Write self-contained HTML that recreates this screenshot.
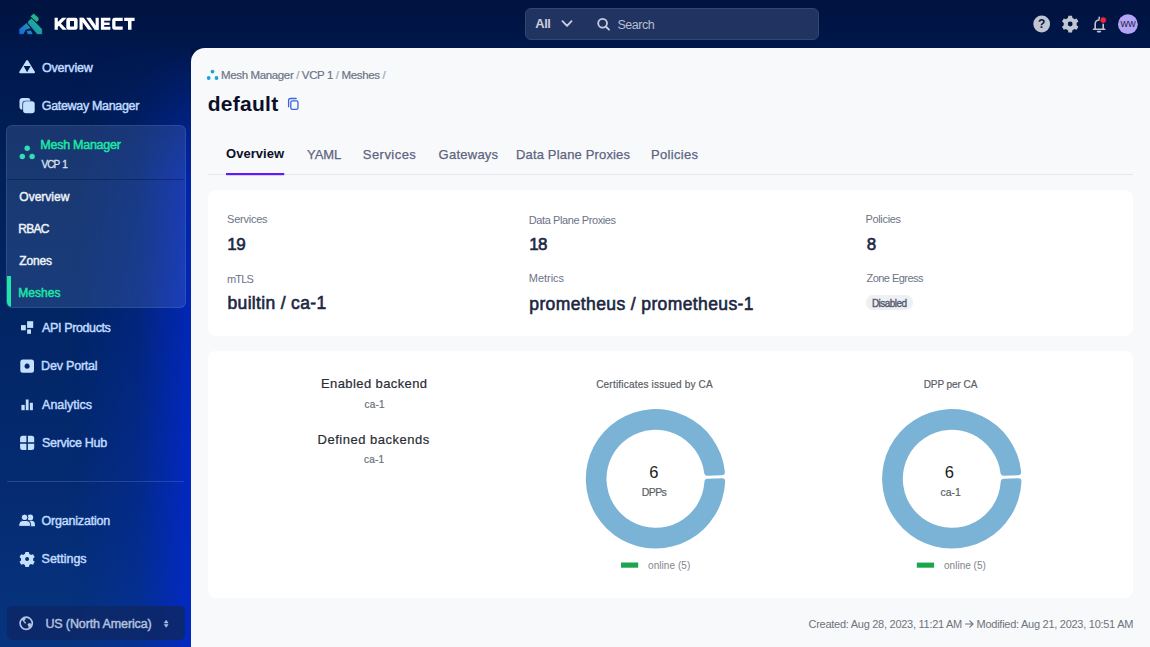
<!DOCTYPE html>
<html><head><meta charset="utf-8">
<style>
*{box-sizing:border-box;margin:0;padding:0}
html,body{width:1150px;height:647px;overflow:hidden}
body{font-family:"Liberation Sans",sans-serif;background:#001442;position:relative}
.a{position:absolute}
.t{position:absolute;white-space:nowrap;line-height:1}
#side{position:absolute;left:0;top:0;width:191px;height:647px;
 background:linear-gradient(180deg,#00184b 0%,#00184d 8%,#002058 25%,#042a70 72%,#07347f 100%)}
#glow{position:absolute;left:0;top:0;width:191px;height:647px;
 background:linear-gradient(90deg,rgba(2,40,205,0) 38%,rgba(2,40,205,0.25) 72%,rgba(2,40,205,0.88) 100%);
 -webkit-mask-image:linear-gradient(180deg,transparent 7%,rgba(0,0,0,0.8) 28%,#000 70%);mask-image:linear-gradient(180deg,transparent 7%,rgba(0,0,0,0.8) 28%,#000 70%)}
#top{position:absolute;left:0;top:0;width:1150px;height:48px;background:linear-gradient(180deg,#00123f 0%,#00184b 100%)}
#main{position:absolute;left:191px;top:48px;width:959px;height:599px;background:#f8f9fb;border-top-left-radius:14px}
.card{position:absolute;background:#fff;border-radius:8px}
</style></head><body>
<div id="side"></div><div id="glow"></div>
<div id="top"></div>
<div id="main"></div>

<!-- logo -->
<svg class="a" style="left:0;top:0" width="48" height="48" viewBox="0 0 48 48">
<defs><linearGradient id="lg" x1="19" y1="34" x2="39" y2="14" gradientUnits="userSpaceOnUse">
<stop offset="0" stop-color="#1c5fe6"/><stop offset="0.55" stop-color="#1d9fa8"/><stop offset="1" stop-color="#26c47a"/></linearGradient></defs>
<g fill="url(#lg)" stroke="#001442" stroke-width="0.7" stroke-linejoin="round">
<polygon points="33.6,13.3 38.9,17.8 38.9,20.4 36.6,22.2 30,16.5"/>
<polygon points="27.6,21.5 31.6,18.1 42.3,29 42.3,34.6 37.1,34.6 27.6,23.2"/>
<polygon points="18.9,29.1 26.5,22.8 31.3,28.4 26.2,29.9 23.4,34.6 18.9,34.6"/>
<polygon points="26,30.6 31.1,30.1 33.2,34.6 27.5,34.6"/>
</g></svg>


<svg class="a" style="left:50px;top:14px" width="90" height="20" viewBox="50 14 90 20">
<g fill="#fff">
<path d="M54.6,17.8 H57.8 V21.9 L62.2,17.8 H66.6 L60.9,23.4 L66.9,29.7 H62.5 L58.9,25.7 L57.8,26.8 V29.7 H54.6 Z"/>
<path fill-rule="evenodd" d="M68.5,17.8 H75.4 A2.2,2.2 0 0 1 77.6,20 V27.5 A2.2,2.2 0 0 1 75.4,29.7 H68.5 A2.2,2.2 0 0 1 66.3,27.5 V20 A2.2,2.2 0 0 1 68.5,17.8 Z M70,21.1 V26.5 H74 V21.1 Z"/>
<rect x="79.5" y="17.8" width="3.2" height="11.9"/>
<polygon points="79.5,17.8 83.7,17.8 92.4,29.7 88.2,29.7"/>
<polygon points="86.2,17.8 90.4,17.8 98.8,29.7 94.6,29.7"/>
<rect x="95.6" y="17.8" width="3.2" height="11.9"/>
<path d="M100.9,17.8 H110.4 V20.8 H104.2 V22.5 H109.6 V25.1 H104.2 V26.8 H110.4 V29.7 H100.9 Z"/>
<path d="M122.7,17.8 H114.7 A2.5,2.5 0 0 0 112.2,20.3 V27.2 A2.5,2.5 0 0 0 114.7,29.7 H122.7 V26.5 H115.5 V21 H122.7 Z"/>
<path d="M124.2,17.8 H134.6 V21 H131.5 V29.7 H128 V21 H124.2 Z"/>
</g></svg>

<!-- search -->
<div class="a" style="left:525px;top:8px;width:294px;height:32px;border-radius:6px;background:#213360;border:1px solid #36476f"></div>
<svg class="a" style="left:560px;top:18px" width="14" height="12" viewBox="0 0 14 12"><polyline points="2.5,3.2 7,7.8 11.5,3.2" fill="none" stroke="#c9cfdc" stroke-width="1.9" stroke-linecap="round" stroke-linejoin="round"/></svg>
<svg class="a" style="left:594px;top:15px" width="18" height="18" viewBox="0 0 18 18"><circle cx="8.6" cy="8.2" r="4.4" fill="none" stroke="#c9cfdc" stroke-width="1.8"/><line x1="11.8" y1="11.5" x2="15" y2="14.7" stroke="#c9cfdc" stroke-width="1.9" stroke-linecap="round"/></svg>

<!-- header icons -->
<svg class="a" style="left:1030px;top:12px" width="110" height="24" viewBox="1030 12 110 24">
<circle cx="1041.7" cy="24" r="8.4" fill="#c0c5d2"/>
<text x="1041.7" y="28.3" font-family="Liberation Sans" font-weight="bold" font-size="12" fill="#001442" text-anchor="middle">?</text>
<g transform="translate(1070.2,24)" fill="#c0c5d2">
<path d="M-1.8,-8.2 h3.6 l0.5,2.3 a6,6 0 0 1 1.9,1.1 l2.2,-0.8 l1.8,3.1 l-1.8,1.5 a6,6 0 0 1 0,2.2 l1.8,1.5 l-1.8,3.1 l-2.2,-0.8 a6,6 0 0 1 -1.9,1.1 l-0.5,2.3 h-3.6 l-0.5,-2.3 a6,6 0 0 1 -1.9,-1.1 l-2.2,0.8 l-1.8,-3.1 l1.8,-1.5 a6,6 0 0 1 0,-2.2 l-1.8,-1.5 l1.8,-3.1 l2.2,0.8 a6,6 0 0 1 1.9,-1.1 z"/>
<circle r="2.4" fill="#001442"/>
</g>
<path d="M1093.5,29.3 h11.3 M1095.2,29.3 v-5.3 a4,4 0 0 1 8,0 v5.3 M1097.6,31.6 h2.8 M1099.2,20 v-2.6" fill="none" stroke="#c0c5d2" stroke-width="1.6" stroke-linecap="round"/>
<circle cx="1103.2" cy="20.1" r="3.3" fill="#f0243c" stroke="#001746" stroke-width="0.9"/>
<circle cx="1127.9" cy="24.2" r="9.9" fill="#b3a4f7"/>
<text x="1127.9" y="27" font-family="Liberation Sans" font-size="8.2" fill="#1d1a3a" text-anchor="middle" letter-spacing="-0.3">WW</text>
</svg>

<!-- sidebar -->
<svg class="a" style="left:0;top:48px" width="191" height="599" viewBox="0 48 191 599">
<g fill="#c3e0ff">
<path d="M27.1,61 L34,72.2 L20.2,72.2 Z" stroke="#c3e0ff" stroke-width="2" stroke-linejoin="round"/>
<path d="M23.6,66.1 L30.6,66.1 L27.1,72.3 Z" fill="#001a50"/>
<rect x="19.5" y="98.1" width="11" height="11.6" rx="3"/>
<rect x="22.4" y="100.7" width="12.8" height="13.1" rx="3.2" fill="#001a58"/>
<rect x="23.1" y="101.3" width="11.6" height="12" rx="2.8"/>
<rect x="27.1" y="321.2" width="6.1" height="6.7"/>
<rect x="21" y="325.1" width="4.8" height="5.2"/>
<rect x="27.1" y="329.4" width="3.9" height="4.4"/>
<path d="M22.8,359.6 h8.7 a2.5,2.5 0 0 1 2.5,2.5 v8.1 a2.5,2.5 0 0 1 -2.5,2.5 h-8.7 a2.5,2.5 0 0 1 -2.5,-2.5 v-8.1 a2.5,2.5 0 0 1 2.5,-2.5 z M27.1,363.6 a2.6,2.6 0 1 0 0.01,0 z" fill-rule="evenodd"/>
<rect x="21.4" y="404.9" width="3.3" height="5.3"/>
<rect x="25.8" y="399.5" width="2.8" height="10.7"/>
<rect x="29.9" y="402.8" width="3" height="7.4"/>
<path d="M22.6,435.8 h3.8 v6.4 h-6.3 v-3.9 a2.5,2.5 0 0 1 2.5,-2.5 z M27.9,435.8 h3.8 a2.5,2.5 0 0 1 2.5,2.5 v3.9 h-6.3 z M20.1,443.7 h6.3 v6.4 h-3.8 a2.5,2.5 0 0 1 -2.5,-2.5 z M27.9,443.7 h6.3 v3.9 a2.5,2.5 0 0 1 -2.5,2.5 h-3.8 z"/>
<circle cx="30.3" cy="517.4" r="2.9"/>
<path d="M27.5,526.2 v-1.8 a3.6,3.6 0 0 1 3.6,-3.6 h0.3 a3.5,3.5 0 0 1 3.5,3.5 v1.9 z"/>
<circle cx="24.6" cy="517.4" r="3.3" stroke="#072468" stroke-width="1"/>
<path d="M18.8,526.4 v-2 a3.9,3.9 0 0 1 3.9,-3.9 h4 a3.9,3.9 0 0 1 3.9,3.9 v2 z" stroke="#072468" stroke-width="1"/>
<g transform="translate(27.1,558.9)">
<path d="M-1.7,-7 h3.4 l0.5,2.1 a5,5 0 0 1 1.6,0.9 l2.1,-0.7 l1.7,2.9 l-1.6,1.4 a5,5 0 0 1 0,1.9 l1.6,1.4 l-1.7,2.9 l-2.1,-0.7 a5,5 0 0 1 -1.6,0.9 l-0.5,2.1 h-3.4 l-0.5,-2.1 a5,5 0 0 1 -1.6,-0.9 l-2.1,0.7 l-1.7,-2.9 l1.6,-1.4 a5,5 0 0 1 0,-1.9 l-1.6,-1.4 l1.7,-2.9 l2.1,0.7 a5,5 0 0 1 1.6,-0.9 z M0,-2 a2,2 0 1 0 0.01,0 z" fill-rule="evenodd"/>
</g>
</g>
<circle cx="27.2" cy="148.2" r="2.7" fill="#1de9a6"/>
<circle cx="22.3" cy="156.5" r="2.7" fill="#1de9a6"/>
<circle cx="32.1" cy="156.5" r="2.7" fill="#1de9a6"/>
</svg>

<!-- mesh manager box -->
<div class="a" style="left:6px;top:125px;width:179.5px;height:183px;border-radius:6px;background:rgba(150,175,240,0.17);border:1px solid rgba(180,200,250,0.13);overflow:hidden">
 <div class="a" style="left:0;top:53px;width:177px;height:1px;background:rgba(0,10,50,0.35)"></div>
 <div class="a" style="left:-1px;top:150px;width:4.5px;height:33px;background:#1de9a6"></div>
</div>
<div class="a" style="left:7px;top:481px;width:177px;height:1px;background:rgba(150,170,230,0.22)"></div>
<div class="a" style="left:6.8px;top:605.7px;width:178.4px;height:34.6px;border-radius:5px;background:rgba(12,40,104,0.88)"></div>
<svg class="a" style="left:0;top:600px" width="191" height="47" viewBox="0 600 191 47">
<circle cx="26.2" cy="623.3" r="6.1" fill="none" stroke="#b5c3e0" stroke-width="1.7"/>
<path d="M21.6,619.3 q1.2,-1.6 3.4,-2.2 l0.6,2.2 l-1.4,1.6 l1.8,1.6 l-0.8,1.6 z" fill="#b5c3e0"/>
<path d="M27.3,624 l2.6,-0.9 l2.1,1.1 q-0.6,2.9 -3.3,4.5 l-0.3,-2.4 z" fill="#b5c3e0"/>
<path d="M164.3,622.9 L166.2,620.2 L168.1,622.9 Z M164.3,624.6 L166.2,627.3 L168.1,624.6 Z" fill="#b3c1dd" stroke="#b3c1dd" stroke-width="0.6" stroke-linejoin="round"/>
</svg>

<!-- main content decorations -->
<svg class="a" style="left:191px;top:48px" width="959" height="599" viewBox="191 48 959 599">
<circle cx="212.5" cy="71.6" r="1.9" fill="#1aa3d8"/>
<circle cx="208.7" cy="78" r="1.9" fill="#1aa3d8"/>
<circle cx="216.5" cy="78" r="1.9" fill="#1aa3d8"/>
<path d="M288.6,106.8 v-6.3 a2,2 0 0 1 2,-2 h5.6" fill="none" stroke="#3b64de" stroke-width="1.3" stroke-linecap="round"/>
<rect x="290.8" y="100.8" width="7.2" height="8.5" rx="1.6" fill="none" stroke="#3b64de" stroke-width="1.3"/>
<rect x="208" y="174" width="925" height="1" fill="#e4e7ec"/>
<rect x="226" y="173" width="58.2" height="2.2" fill="#5f1bfa"/>
</svg>

<div class="card" style="left:208px;top:190px;width:925px;height:146px"></div>
<div class="card" style="left:208px;top:350.5px;width:925px;height:247.5px"></div>
<div class="a" style="left:866px;top:295px;width:46.7px;height:15.4px;border-radius:7px;background:#eef0f4"></div>

<svg class="a" style="left:560px;top:380px" width="500" height="200" viewBox="560 380 500 200">
<path d="M707.51 478.67 L721.85 478.22 A3.2 3.2 0 0 1 725.15 481.54 A69.7 69.7 0 1 1 724.84 471.69 A3.2 3.2 0 0 1 721.75 475.22 L707.42 475.67 A3.2 3.2 0 0 1 704.14 472.86 A49 49 0 1 0 704.42 481.68 A3.2 3.2 0 0 1 707.51 478.67 Z" fill="#7bb3d6"/>
<path d="M1003.81 478.67 L1018.15 478.22 A3.2 3.2 0 0 1 1021.45 481.54 A69.7 69.7 0 1 1 1021.14 471.69 A3.2 3.2 0 0 1 1018.05 475.22 L1003.72 475.67 A3.2 3.2 0 0 1 1000.44 472.86 A49 49 0 1 0 1000.72 481.68 A3.2 3.2 0 0 1 1003.81 478.67 Z" fill="#7bb3d6"/>
<rect x="621" y="562.5" width="17.2" height="5.2" fill="#1ba64e"/>
<rect x="916.8" y="562.6" width="17.3" height="5.1" fill="#1ba64e"/>
</svg>

<div class="t" style="left:41.9px;top:61.8px;font-size:12.5px;font-weight:normal;letter-spacing:-0.157px;color:#c0dbff;-webkit-text-stroke:0.45px #c0dbff">Overview</div>
<div class="t" style="left:41.8px;top:100.1px;font-size:12.5px;font-weight:normal;letter-spacing:-0.329px;color:#c0dbff;-webkit-text-stroke:0.45px #c0dbff">Gateway Manager</div>
<div class="t" style="left:40.3px;top:139.4px;font-size:12.5px;font-weight:normal;letter-spacing:-0.255px;color:#1de9a6;-webkit-text-stroke:0.45px #1de9a6">Mesh Manager</div>
<div class="t" style="left:41.5px;top:160.0px;font-size:10px;font-weight:normal;letter-spacing:-0.975px;color:#dfe4ee;-webkit-text-stroke:0.3px #dfe4ee;word-spacing:1.5px">VCP 1</div>
<div class="t" style="left:19.3px;top:190.5px;font-size:12px;font-weight:normal;letter-spacing:0.014px;color:#eef2f8;-webkit-text-stroke:0.45px #eef2f8">Overview</div>
<div class="t" style="left:18.3px;top:223.0px;font-size:12px;font-weight:normal;letter-spacing:-0.767px;color:#eef2f8;-webkit-text-stroke:0.45px #eef2f8">RBAC</div>
<div class="t" style="left:19.3px;top:255.0px;font-size:12px;font-weight:normal;letter-spacing:-0.15px;color:#eef2f8;-webkit-text-stroke:0.45px #eef2f8">Zones</div>
<div class="t" style="left:18.3px;top:287.0px;font-size:12px;font-weight:normal;letter-spacing:0.04px;color:#1de9a6;-webkit-text-stroke:0.45px #1de9a6">Meshes</div>
<div class="t" style="left:42.1px;top:321.8px;font-size:12.5px;font-weight:normal;letter-spacing:-0.382px;color:#c0dbff;-webkit-text-stroke:0.45px #c0dbff">API Products</div>
<div class="t" style="left:41.1px;top:360.2px;font-size:12.5px;font-weight:normal;letter-spacing:-0.2px;color:#c0dbff;-webkit-text-stroke:0.45px #c0dbff">Dev Portal</div>
<div class="t" style="left:42.1px;top:399.2px;font-size:12.5px;font-weight:normal;letter-spacing:-0.025px;color:#c0dbff;-webkit-text-stroke:0.45px #c0dbff">Analytics</div>
<div class="t" style="left:42.1px;top:437.3px;font-size:12.5px;font-weight:normal;letter-spacing:-0.31px;color:#c0dbff;-webkit-text-stroke:0.45px #c0dbff">Service Hub</div>
<div class="t" style="left:41.6px;top:514.8px;font-size:12.5px;font-weight:normal;letter-spacing:-0.209px;color:#c0dbff;-webkit-text-stroke:0.45px #c0dbff">Organization</div>
<div class="t" style="left:41.6px;top:553.4px;font-size:12.5px;font-weight:normal;letter-spacing:-0.029px;color:#c0dbff;-webkit-text-stroke:0.45px #c0dbff">Settings</div>
<div class="t" style="left:45.4px;top:617.7px;font-size:12.5px;font-weight:normal;letter-spacing:-0.118px;color:#b3c1dd;-webkit-text-stroke:0.45px #b3c1dd">US (North America)</div>
<div class="t" style="left:535.3px;top:17.2px;font-size:13px;font-weight:bold;letter-spacing:-0.5px;color:#c9cfdc;">All</div>
<div class="t" style="left:617.5px;top:18.6px;font-size:12.5px;font-weight:normal;letter-spacing:-0.5px;color:#b6bfd2;">Search</div>
<div class="t" style="left:221.1px;top:69.7px;font-size:11.5px;font-weight:normal;letter-spacing:-0.37px;color:#6c7387;-webkit-text-stroke:0.2px #6c7387">Mesh Manager <span style="color:#b4b9c4">/</span> VCP 1 <span style="color:#b4b9c4">/</span> Meshes <span style="color:#b4b9c4">/</span></div>
<div class="t" style="left:207.8px;top:93.1px;font-size:21px;font-weight:bold;letter-spacing:0.25px;color:#0b0f28;">default</div>
<div class="t" style="left:226.1px;top:147.0px;font-size:13px;font-weight:bold;letter-spacing:0.014px;color:#0b0f28;">Overview</div>
<div class="t" style="left:307.0px;top:147.6px;font-size:13px;font-weight:normal;letter-spacing:-0.033px;color:#5d6480;-webkit-text-stroke:0.25px #5d6480">YAML</div>
<div class="t" style="left:362.8px;top:147.6px;font-size:13px;font-weight:normal;letter-spacing:0.457px;color:#5d6480;-webkit-text-stroke:0.25px #5d6480">Services</div>
<div class="t" style="left:438.6px;top:147.6px;font-size:13px;font-weight:normal;letter-spacing:0.243px;color:#5d6480;-webkit-text-stroke:0.25px #5d6480">Gateways</div>
<div class="t" style="left:516.0px;top:147.6px;font-size:13px;font-weight:normal;letter-spacing:0.159px;color:#5d6480;-webkit-text-stroke:0.25px #5d6480">Data Plane Proxies</div>
<div class="t" style="left:651.1px;top:147.6px;font-size:13px;font-weight:normal;letter-spacing:0.286px;color:#5d6480;-webkit-text-stroke:0.25px #5d6480">Policies</div>
<div class="t" style="left:227.1px;top:214.3px;font-size:11px;font-weight:normal;letter-spacing:-0.243px;color:#6c7387;">Services</div>
<div class="t" style="left:227.3px;top:236.3px;font-size:17px;font-weight:normal;letter-spacing:-0.5px;color:#1c2742;-webkit-text-stroke:0.6px #1c2742">19</div>
<div class="t" style="left:227.0px;top:273.9px;font-size:11px;font-weight:normal;letter-spacing:-0.833px;color:#6c7387;">mTLS</div>
<div class="t" style="left:227.5px;top:295.3px;font-size:17.5px;font-weight:normal;letter-spacing:0.331px;color:#1c2742;-webkit-text-stroke:0.6px #1c2742">builtin / ca-1</div>
<div class="t" style="left:528.8px;top:214.7px;font-size:11px;font-weight:normal;letter-spacing:-0.412px;color:#6c7387;">Data Plane Proxies</div>
<div class="t" style="left:529.3px;top:236.3px;font-size:17px;font-weight:normal;letter-spacing:-0.7px;color:#1c2742;-webkit-text-stroke:0.6px #1c2742">18</div>
<div class="t" style="left:528.8px;top:273.4px;font-size:11px;font-weight:normal;letter-spacing:-0.033px;color:#6c7387;">Metrics</div>
<div class="t" style="left:529.3px;top:296.3px;font-size:17.5px;font-weight:normal;letter-spacing:0.383px;color:#1c2742;-webkit-text-stroke:0.6px #1c2742">prometheus / prometheus-1</div>
<div class="t" style="left:865.5px;top:214.3px;font-size:11px;font-weight:normal;letter-spacing:-0.343px;color:#6c7387;">Policies</div>
<div class="t" style="left:866.8px;top:236.2px;font-size:17px;font-weight:normal;letter-spacing:0.3px;color:#1c2742;-webkit-text-stroke:0.6px #1c2742">8</div>
<div class="t" style="left:866.5px;top:273.2px;font-size:11px;font-weight:normal;letter-spacing:-0.53px;color:#6c7387;">Zone Egress</div>
<div class="t" style="left:871.9px;top:299.2px;font-size:10px;font-weight:normal;letter-spacing:-0.529px;color:#555c70;-webkit-text-stroke:0.4px #555c70">Disabled</div>
<div class="t" style="left:321.0px;top:377.0px;font-size:13px;font-weight:normal;letter-spacing:0.4px;color:#2b2d36;-webkit-text-stroke:0.2px #2b2d36">Enabled backend</div>
<div class="t" style="left:364.6px;top:399.9px;font-size:10px;font-weight:normal;letter-spacing:0.133px;color:#6b6f78;-webkit-text-stroke:0.2px #6b6f78">ca-1</div>
<div class="t" style="left:317.6px;top:432.9px;font-size:13px;font-weight:normal;letter-spacing:0.507px;color:#2b2d36;-webkit-text-stroke:0.2px #2b2d36">Defined backends</div>
<div class="t" style="left:364.1px;top:455.4px;font-size:10px;font-weight:normal;letter-spacing:0.133px;color:#6b6f78;-webkit-text-stroke:0.2px #6b6f78">ca-1</div>
<div class="t" style="left:596.2px;top:379.9px;font-size:10px;font-weight:normal;letter-spacing:0.2px;color:#5a5e66;-webkit-text-stroke:0.2px #5a5e66">Certificates issued by CA</div>
<div class="t" style="left:649.3px;top:463.8px;font-size:16.5px;font-weight:normal;letter-spacing:1.2px;color:#1a1a1a;">6</div>
<div class="t" style="left:641.8px;top:486.5px;font-size:10.5px;font-weight:normal;letter-spacing:-0.6px;color:#5a5e66;-webkit-text-stroke:0.2px #5a5e66">DPPs</div>
<div class="t" style="left:648.0px;top:561.2px;font-size:10px;font-weight:normal;letter-spacing:0.067px;color:#80848c;">online (5)</div>
<div class="t" style="left:923.7px;top:379.8px;font-size:10px;font-weight:normal;letter-spacing:-0.067px;color:#5a5e66;-webkit-text-stroke:0.2px #5a5e66">DPP per CA</div>
<div class="t" style="left:944.8px;top:463.8px;font-size:16.5px;font-weight:normal;letter-spacing:0.9px;color:#1a1a1a;">6</div>
<div class="t" style="left:940.6px;top:487.0px;font-size:10.5px;font-weight:normal;letter-spacing:-0.1px;color:#5a5e66;-webkit-text-stroke:0.2px #5a5e66">ca-1</div>
<div class="t" style="left:944.0px;top:561.2px;font-size:10px;font-weight:normal;letter-spacing:0.022px;color:#80848c;">online (5)</div>
<div class="t" style="left:808.5px;top:618.5px;font-size:11px;font-weight:normal;letter-spacing:-0.269px;color:#6e737c;">Created: Aug 28, 2023, 11:21 AM <svg width="9" height="8" viewBox="0 0 9 8" style="vertical-align:0px"><path d="M0.5,4 H8 M4.8,0.9 L8,4 L4.8,7.1" fill="none" stroke="currentColor" stroke-width="1.1" stroke-linecap="round" stroke-linejoin="round"/></svg> Modified: Aug 21, 2023, 10:51 AM</div>
</body></html>
